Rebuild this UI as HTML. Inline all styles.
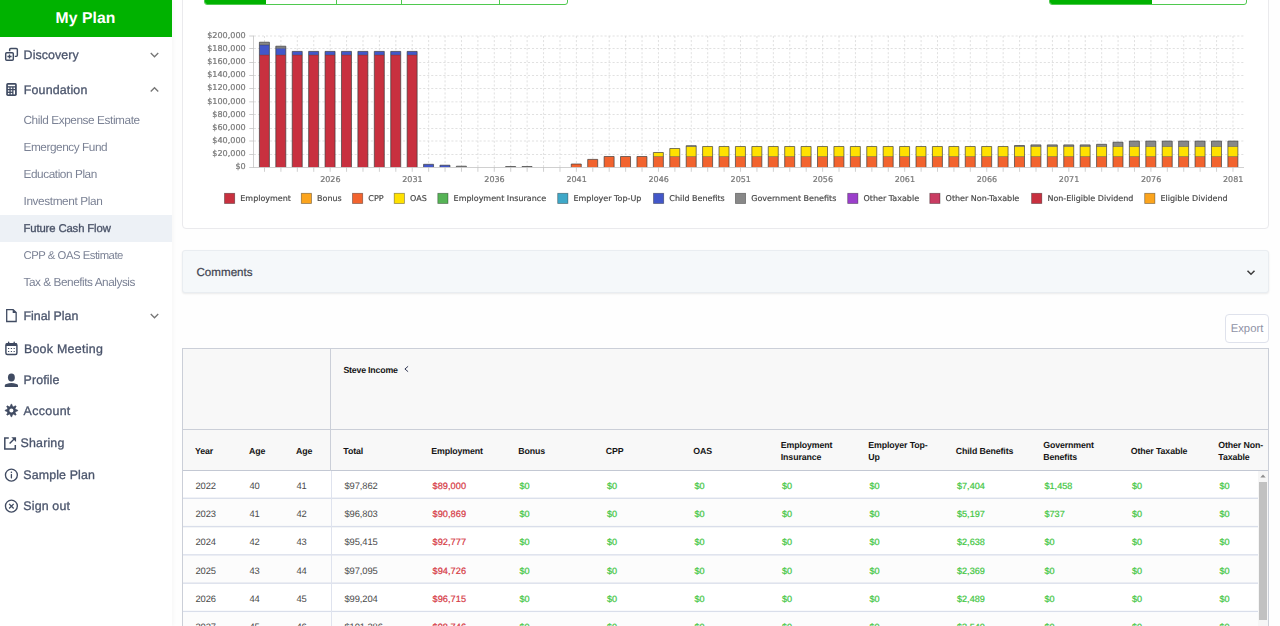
<!DOCTYPE html><html lang="en"><head><meta charset="utf-8"><title>My Plan - Future Cash Flow</title><style>
*{box-sizing:border-box;margin:0;padding:0}
html,body{width:1280px;height:626px;overflow:hidden;background:#fefefe;font-family:"Liberation Sans",sans-serif;text-rendering:geometricPrecision}
svg text{text-rendering:geometricPrecision}
#app{position:relative;width:1280px;height:626px;overflow:hidden}
.gs{will-change:transform}
.abs{position:absolute}
#side{position:absolute;left:0;top:0;width:172px;height:626px;background:#fff;box-shadow:1px 0 4px rgba(0,0,0,.04)}
#brand{position:absolute;left:0;top:0;width:172px;padding-right:1px;height:37px;background:#00b200;color:#fff;font-weight:700;font-size:15.7px;letter-spacing:0.12px;text-align:center;line-height:37px}
.mi{position:absolute;left:24px;font-size:12.4px;letter-spacing:0.05px;color:#4a546b;white-space:nowrap;line-height:16px;-webkit-text-stroke:0.3px #4a546b}
.si{position:absolute;left:24px;font-size:11.8px;color:#7b8295;white-space:nowrap;line-height:14px}
.si.act{color:#4a5368;-webkit-text-stroke:0.32px #4a5368}
.ic{position:absolute}
#card{position:absolute;left:182px;top:-20px;width:1087px;height:249px;background:#fff;border:1px solid #eaeaed;border-radius:4px}
#comments{position:absolute;left:182px;top:250px;width:1087px;height:43px;background:#f5f8fa;border:1px solid #e9edf1;border-radius:3px;box-shadow:0 1px 2px rgba(0,0,0,.08)}
#comments span{position:absolute;left:13.5px;top:15px;font-size:11.6px;line-height:14px;color:#3f4450;-webkit-text-stroke:0.22px #3f4450}
#export{position:absolute;left:1225px;top:314px;width:44px;height:29px;border:1px solid #dfe2ec;border-radius:4px;background:#fff;color:#8f93a6;font-size:11.3px;line-height:29px;text-align:center}
#tbl{position:absolute;left:182px;top:348px;width:1087px;height:290px;background:#fff;border:1px solid #cbcfd8;border-bottom:none}
.hd{position:absolute;background:#f8f8f8}
.th{position:absolute;font-weight:700;font-size:8.8px;letter-spacing:-0.12px;line-height:12px;color:#151515;white-space:nowrap}
.td{position:absolute;font-size:9.4px;letter-spacing:-0.1px;line-height:12px;color:#4a4a4a;white-space:nowrap}
.g{color:#45c745;-webkit-text-stroke:0.22px #45c745;font-size:9.1px;letter-spacing:0px}
.r{color:#d63a45;-webkit-text-stroke:0.22px #d63a45;font-size:9.2px;letter-spacing:0.05px}
.row{position:absolute;left:0;width:1075px}
.rl{position:absolute;left:0;width:1075px;height:1.33px;background:#dde1ec}
</style></head><body><div id="app">
<div id="card"></div>
<div class="abs" style="left:204.4px;top:-30px;width:363.4px;height:35px;border:1px solid #4fc94f;border-radius:3px;background:#fff;overflow:hidden"><div class="abs" style="left:-1px;top:-1px;width:62px;height:35px;background:#00b200"></div><div class="abs" style="left:131px;top:0;width:1px;height:35px;background:#4fc94f"></div><div class="abs" style="left:196px;top:0;width:1px;height:35px;background:#4fc94f"></div><div class="abs" style="left:294px;top:0;width:1px;height:35px;background:#4fc94f"></div></div>
<div class="abs" style="left:1049.4px;top:-30px;width:197.6px;height:35px;border:1px solid #4fc94f;border-radius:3px;background:#fff;overflow:hidden"><div class="abs" style="left:-1px;top:-1px;width:103px;height:35px;background:#00b200"></div></div>
<svg class="abs gs" style="left:0;top:0" width="1280" height="230" viewBox="0 0 1280 230" font-family="'DejaVu Sans',sans-serif" font-size="8"><g stroke="#d2d2d2" stroke-width="0.667" stroke-dasharray="2.1 1.93" fill="none"><path d="M253.9 36.00H1244"/><path d="M253.9 48.50H1244"/><path d="M253.9 62.50H1244"/><path d="M253.9 75.50H1244"/><path d="M253.9 88.50H1244"/><path d="M253.9 101.85H1244"/><path d="M253.9 114.50H1244"/><path d="M253.9 128.50H1244"/><path d="M253.9 141.00H1244"/><path d="M253.9 154.50H1244"/><path d="M264.50 36.0V167.5"/><path d="M280.92 36.0V167.5"/><path d="M297.33 36.0V167.5"/><path d="M313.75 36.0V167.5"/><path d="M330.16 36.0V167.5"/><path d="M346.57 36.0V167.5"/><path d="M362.99 36.0V167.5"/><path d="M379.40 36.0V167.5"/><path d="M395.82 36.0V167.5"/><path d="M412.24 36.0V167.5"/><path d="M428.65 36.0V167.5"/><path d="M445.06 36.0V167.5"/><path d="M461.48 36.0V167.5"/><path d="M477.89 36.0V167.5"/><path d="M494.31 36.0V167.5"/><path d="M510.73 36.0V167.5"/><path d="M527.14 36.0V167.5"/><path d="M543.56 36.0V167.5"/><path d="M559.97 36.0V167.5"/><path d="M576.38 36.0V167.5"/><path d="M592.80 36.0V167.5"/><path d="M609.21 36.0V167.5"/><path d="M625.63 36.0V167.5"/><path d="M642.04 36.0V167.5"/><path d="M658.46 36.0V167.5"/><path d="M674.88 36.0V167.5"/><path d="M691.29 36.0V167.5"/><path d="M707.70 36.0V167.5"/><path d="M724.12 36.0V167.5"/><path d="M740.53 36.0V167.5"/><path d="M756.95 36.0V167.5"/><path d="M773.37 36.0V167.5"/><path d="M789.78 36.0V167.5"/><path d="M806.19 36.0V167.5"/><path d="M822.61 36.0V167.5"/><path d="M839.02 36.0V167.5"/><path d="M855.44 36.0V167.5"/><path d="M871.86 36.0V167.5"/><path d="M888.27 36.0V167.5"/><path d="M904.68 36.0V167.5"/><path d="M921.10 36.0V167.5"/><path d="M937.51 36.0V167.5"/><path d="M953.93 36.0V167.5"/><path d="M970.34 36.0V167.5"/><path d="M986.76 36.0V167.5"/><path d="M1003.17 36.0V167.5"/><path d="M1019.59 36.0V167.5"/><path d="M1036.01 36.0V167.5"/><path d="M1052.42 36.0V167.5"/><path d="M1068.84 36.0V167.5"/><path d="M1085.25 36.0V167.5"/><path d="M1101.66 36.0V167.5"/><path d="M1118.08 36.0V167.5"/><path d="M1134.49 36.0V167.5"/><path d="M1150.91 36.0V167.5"/><path d="M1167.32 36.0V167.5"/><path d="M1183.74 36.0V167.5"/><path d="M1200.15 36.0V167.5"/><path d="M1216.57 36.0V167.5"/><path d="M1232.98 36.0V167.5"/></g><g stroke="#b8b8b8" stroke-width="0.667" fill="none"><path d="M253.5 35.67V167.5"/><path d="M249.2 167.5H1244"/><path d="M249.2 36.00H253.5"/><path d="M249.2 48.50H253.5"/><path d="M249.2 62.50H253.5"/><path d="M249.2 75.50H253.5"/><path d="M249.2 88.50H253.5"/><path d="M249.2 101.85H253.5"/><path d="M249.2 114.50H253.5"/><path d="M249.2 128.50H253.5"/><path d="M249.2 141.00H253.5"/><path d="M249.2 154.50H253.5"/><path d="M264.50 167.5V171.8"/><path d="M280.92 167.5V171.8"/><path d="M297.33 167.5V171.8"/><path d="M313.75 167.5V171.8"/><path d="M330.16 167.5V171.8"/><path d="M346.57 167.5V171.8"/><path d="M362.99 167.5V171.8"/><path d="M379.40 167.5V171.8"/><path d="M395.82 167.5V171.8"/><path d="M412.24 167.5V171.8"/><path d="M428.65 167.5V171.8"/><path d="M445.06 167.5V171.8"/><path d="M461.48 167.5V171.8"/><path d="M477.89 167.5V171.8"/><path d="M494.31 167.5V171.8"/><path d="M510.73 167.5V171.8"/><path d="M527.14 167.5V171.8"/><path d="M543.56 167.5V171.8"/><path d="M559.97 167.5V171.8"/><path d="M576.38 167.5V171.8"/><path d="M592.80 167.5V171.8"/><path d="M609.21 167.5V171.8"/><path d="M625.63 167.5V171.8"/><path d="M642.04 167.5V171.8"/><path d="M658.46 167.5V171.8"/><path d="M674.88 167.5V171.8"/><path d="M691.29 167.5V171.8"/><path d="M707.70 167.5V171.8"/><path d="M724.12 167.5V171.8"/><path d="M740.53 167.5V171.8"/><path d="M756.95 167.5V171.8"/><path d="M773.37 167.5V171.8"/><path d="M789.78 167.5V171.8"/><path d="M806.19 167.5V171.8"/><path d="M822.61 167.5V171.8"/><path d="M839.02 167.5V171.8"/><path d="M855.44 167.5V171.8"/><path d="M871.86 167.5V171.8"/><path d="M888.27 167.5V171.8"/><path d="M904.68 167.5V171.8"/><path d="M921.10 167.5V171.8"/><path d="M937.51 167.5V171.8"/><path d="M953.93 167.5V171.8"/><path d="M970.34 167.5V171.8"/><path d="M986.76 167.5V171.8"/><path d="M1003.17 167.5V171.8"/><path d="M1019.59 167.5V171.8"/><path d="M1036.01 167.5V171.8"/><path d="M1052.42 167.5V171.8"/><path d="M1068.84 167.5V171.8"/><path d="M1085.25 167.5V171.8"/><path d="M1101.66 167.5V171.8"/><path d="M1118.08 167.5V171.8"/><path d="M1134.49 167.5V171.8"/><path d="M1150.91 167.5V171.8"/><path d="M1167.32 167.5V171.8"/><path d="M1183.74 167.5V171.8"/><path d="M1200.15 167.5V171.8"/><path d="M1216.57 167.5V171.8"/><path d="M1232.98 167.5V171.8"/></g><g><rect x="259.40" y="54.90" width="10.0" height="112.15" fill="#c8303f"/><rect x="259.40" y="45.00" width="10.0" height="9.90" fill="#4357c9"/><rect x="259.40" y="42.20" width="10.0" height="2.80" fill="#888888"/><rect x="275.81" y="54.90" width="10.0" height="112.15" fill="#c8303f"/><rect x="275.81" y="48.30" width="10.0" height="6.60" fill="#4357c9"/><rect x="275.81" y="46.20" width="10.0" height="2.10" fill="#888888"/><rect x="292.23" y="54.90" width="10.0" height="112.15" fill="#c8303f"/><rect x="292.23" y="51.40" width="10.0" height="3.50" fill="#4357c9"/><rect x="308.64" y="54.90" width="10.0" height="112.15" fill="#c8303f"/><rect x="308.64" y="51.40" width="10.0" height="3.50" fill="#4357c9"/><rect x="325.06" y="54.90" width="10.0" height="112.15" fill="#c8303f"/><rect x="325.06" y="51.40" width="10.0" height="3.50" fill="#4357c9"/><rect x="341.47" y="54.90" width="10.0" height="112.15" fill="#c8303f"/><rect x="341.47" y="51.40" width="10.0" height="3.50" fill="#4357c9"/><rect x="357.89" y="54.90" width="10.0" height="112.15" fill="#c8303f"/><rect x="357.89" y="51.40" width="10.0" height="3.50" fill="#4357c9"/><rect x="374.30" y="54.90" width="10.0" height="112.15" fill="#c8303f"/><rect x="374.30" y="51.40" width="10.0" height="3.50" fill="#4357c9"/><rect x="390.72" y="54.90" width="10.0" height="112.15" fill="#c8303f"/><rect x="390.72" y="51.40" width="10.0" height="3.50" fill="#4357c9"/><rect x="407.13" y="54.90" width="10.0" height="112.15" fill="#c8303f"/><rect x="407.13" y="51.40" width="10.0" height="3.50" fill="#4357c9"/><rect x="423.55" y="164.30" width="10.0" height="2.75" fill="#4357c9"/><rect x="439.96" y="165.20" width="10.0" height="1.85" fill="#4357c9"/><rect x="456.38" y="166.20" width="10.0" height="0.85" fill="#888888"/><rect x="505.62" y="166.50" width="10.0" height="0.55" fill="#888888"/><rect x="522.04" y="166.50" width="10.0" height="0.55" fill="#888888"/><rect x="571.28" y="164.00" width="10.0" height="3.05" fill="#f2632e"/><rect x="587.70" y="159.40" width="10.0" height="7.65" fill="#f2632e"/><rect x="604.11" y="156.50" width="10.0" height="10.55" fill="#f2632e"/><rect x="620.53" y="156.50" width="10.0" height="10.55" fill="#f2632e"/><rect x="636.94" y="156.50" width="10.0" height="10.55" fill="#f2632e"/><rect x="653.36" y="156.50" width="10.0" height="10.55" fill="#f2632e"/><rect x="653.36" y="152.50" width="10.0" height="4.00" fill="#ffe100"/><rect x="669.77" y="156.50" width="10.0" height="10.55" fill="#f2632e"/><rect x="669.77" y="148.50" width="10.0" height="8.00" fill="#ffe100"/><rect x="686.19" y="156.50" width="10.0" height="10.55" fill="#f2632e"/><rect x="686.19" y="146.50" width="10.0" height="10.00" fill="#ffe100"/><rect x="686.19" y="145.70" width="10.0" height="0.80" fill="#888888"/><rect x="702.60" y="156.50" width="10.0" height="10.55" fill="#f2632e"/><rect x="702.60" y="146.50" width="10.0" height="10.00" fill="#ffe100"/><rect x="719.02" y="156.50" width="10.0" height="10.55" fill="#f2632e"/><rect x="719.02" y="146.50" width="10.0" height="10.00" fill="#ffe100"/><rect x="735.43" y="156.50" width="10.0" height="10.55" fill="#f2632e"/><rect x="735.43" y="146.50" width="10.0" height="10.00" fill="#ffe100"/><rect x="751.85" y="156.50" width="10.0" height="10.55" fill="#f2632e"/><rect x="751.85" y="146.50" width="10.0" height="10.00" fill="#ffe100"/><rect x="768.26" y="156.50" width="10.0" height="10.55" fill="#f2632e"/><rect x="768.26" y="146.50" width="10.0" height="10.00" fill="#ffe100"/><rect x="784.68" y="156.50" width="10.0" height="10.55" fill="#f2632e"/><rect x="784.68" y="146.50" width="10.0" height="10.00" fill="#ffe100"/><rect x="801.09" y="156.50" width="10.0" height="10.55" fill="#f2632e"/><rect x="801.09" y="146.50" width="10.0" height="10.00" fill="#ffe100"/><rect x="817.51" y="156.50" width="10.0" height="10.55" fill="#f2632e"/><rect x="817.51" y="146.50" width="10.0" height="10.00" fill="#ffe100"/><rect x="833.92" y="156.50" width="10.0" height="10.55" fill="#f2632e"/><rect x="833.92" y="146.50" width="10.0" height="10.00" fill="#ffe100"/><rect x="850.34" y="156.50" width="10.0" height="10.55" fill="#f2632e"/><rect x="850.34" y="146.50" width="10.0" height="10.00" fill="#ffe100"/><rect x="866.75" y="156.50" width="10.0" height="10.55" fill="#f2632e"/><rect x="866.75" y="146.50" width="10.0" height="10.00" fill="#ffe100"/><rect x="883.17" y="156.50" width="10.0" height="10.55" fill="#f2632e"/><rect x="883.17" y="146.50" width="10.0" height="10.00" fill="#ffe100"/><rect x="899.58" y="156.50" width="10.0" height="10.55" fill="#f2632e"/><rect x="899.58" y="146.50" width="10.0" height="10.00" fill="#ffe100"/><rect x="916.00" y="156.50" width="10.0" height="10.55" fill="#f2632e"/><rect x="916.00" y="146.50" width="10.0" height="10.00" fill="#ffe100"/><rect x="932.41" y="156.50" width="10.0" height="10.55" fill="#f2632e"/><rect x="932.41" y="146.50" width="10.0" height="10.00" fill="#ffe100"/><rect x="948.83" y="156.50" width="10.0" height="10.55" fill="#f2632e"/><rect x="948.83" y="146.50" width="10.0" height="10.00" fill="#ffe100"/><rect x="965.24" y="156.50" width="10.0" height="10.55" fill="#f2632e"/><rect x="965.24" y="146.50" width="10.0" height="10.00" fill="#ffe100"/><rect x="981.66" y="156.50" width="10.0" height="10.55" fill="#f2632e"/><rect x="981.66" y="146.50" width="10.0" height="10.00" fill="#ffe100"/><rect x="998.07" y="156.50" width="10.0" height="10.55" fill="#f2632e"/><rect x="998.07" y="146.50" width="10.0" height="10.00" fill="#ffe100"/><rect x="1014.49" y="156.50" width="10.0" height="10.55" fill="#f2632e"/><rect x="1014.49" y="146.50" width="10.0" height="10.00" fill="#ffe100"/><rect x="1014.49" y="145.50" width="10.0" height="1.00" fill="#888888"/><rect x="1030.91" y="156.50" width="10.0" height="10.55" fill="#f2632e"/><rect x="1030.91" y="146.50" width="10.0" height="10.00" fill="#ffe100"/><rect x="1030.91" y="144.90" width="10.0" height="1.60" fill="#888888"/><rect x="1047.32" y="156.50" width="10.0" height="10.55" fill="#f2632e"/><rect x="1047.32" y="146.50" width="10.0" height="10.00" fill="#ffe100"/><rect x="1047.32" y="144.90" width="10.0" height="1.60" fill="#888888"/><rect x="1063.74" y="156.50" width="10.0" height="10.55" fill="#f2632e"/><rect x="1063.74" y="146.50" width="10.0" height="10.00" fill="#ffe100"/><rect x="1063.74" y="144.90" width="10.0" height="1.60" fill="#888888"/><rect x="1080.15" y="156.50" width="10.0" height="10.55" fill="#f2632e"/><rect x="1080.15" y="146.50" width="10.0" height="10.00" fill="#ffe100"/><rect x="1080.15" y="144.90" width="10.0" height="1.60" fill="#888888"/><rect x="1096.57" y="156.50" width="10.0" height="10.55" fill="#f2632e"/><rect x="1096.57" y="146.50" width="10.0" height="10.00" fill="#ffe100"/><rect x="1096.57" y="144.30" width="10.0" height="2.20" fill="#888888"/><rect x="1112.98" y="156.50" width="10.0" height="10.55" fill="#f2632e"/><rect x="1112.98" y="146.50" width="10.0" height="10.00" fill="#ffe100"/><rect x="1112.98" y="142.20" width="10.0" height="4.30" fill="#888888"/><rect x="1129.39" y="156.50" width="10.0" height="10.55" fill="#f2632e"/><rect x="1129.39" y="146.50" width="10.0" height="10.00" fill="#ffe100"/><rect x="1129.39" y="141.10" width="10.0" height="5.40" fill="#888888"/><rect x="1145.81" y="156.50" width="10.0" height="10.55" fill="#f2632e"/><rect x="1145.81" y="146.50" width="10.0" height="10.00" fill="#ffe100"/><rect x="1145.81" y="141.10" width="10.0" height="5.40" fill="#888888"/><rect x="1162.22" y="156.50" width="10.0" height="10.55" fill="#f2632e"/><rect x="1162.22" y="146.50" width="10.0" height="10.00" fill="#ffe100"/><rect x="1162.22" y="141.10" width="10.0" height="5.40" fill="#888888"/><rect x="1178.64" y="156.50" width="10.0" height="10.55" fill="#f2632e"/><rect x="1178.64" y="146.50" width="10.0" height="10.00" fill="#ffe100"/><rect x="1178.64" y="141.10" width="10.0" height="5.40" fill="#888888"/><rect x="1195.06" y="156.50" width="10.0" height="10.55" fill="#f2632e"/><rect x="1195.06" y="146.50" width="10.0" height="10.00" fill="#ffe100"/><rect x="1195.06" y="141.10" width="10.0" height="5.40" fill="#888888"/><rect x="1211.47" y="156.50" width="10.0" height="10.55" fill="#f2632e"/><rect x="1211.47" y="146.50" width="10.0" height="10.00" fill="#ffe100"/><rect x="1211.47" y="141.10" width="10.0" height="5.40" fill="#888888"/><rect x="1227.88" y="156.50" width="10.0" height="10.55" fill="#f2632e"/><rect x="1227.88" y="146.50" width="10.0" height="10.00" fill="#ffe100"/><rect x="1227.88" y="141.10" width="10.0" height="5.40" fill="#888888"/></g><path d="M259.40 54.90h10.0M259.40 45.00h10.0M275.81 54.90h10.0M275.81 48.30h10.0M292.23 54.90h10.0M308.64 54.90h10.0M325.06 54.90h10.0M341.47 54.90h10.0M357.89 54.90h10.0M374.30 54.90h10.0M390.72 54.90h10.0M407.13 54.90h10.0M653.36 156.50h10.0M669.77 156.50h10.0M686.19 156.50h10.0M686.19 146.50h10.0M702.60 156.50h10.0M719.02 156.50h10.0M735.43 156.50h10.0M751.85 156.50h10.0M768.26 156.50h10.0M784.68 156.50h10.0M801.09 156.50h10.0M817.51 156.50h10.0M833.92 156.50h10.0M850.34 156.50h10.0M866.75 156.50h10.0M883.17 156.50h10.0M899.58 156.50h10.0M916.00 156.50h10.0M932.41 156.50h10.0M948.83 156.50h10.0M965.24 156.50h10.0M981.66 156.50h10.0M998.07 156.50h10.0M1014.49 156.50h10.0M1014.49 146.50h10.0M1030.91 156.50h10.0M1030.91 146.50h10.0M1047.32 156.50h10.0M1047.32 146.50h10.0M1063.74 156.50h10.0M1063.74 146.50h10.0M1080.15 156.50h10.0M1080.15 146.50h10.0M1096.57 156.50h10.0M1096.57 146.50h10.0M1112.98 156.50h10.0M1112.98 146.50h10.0M1129.39 156.50h10.0M1129.39 146.50h10.0M1145.81 156.50h10.0M1145.81 146.50h10.0M1162.22 156.50h10.0M1162.22 146.50h10.0M1178.64 156.50h10.0M1178.64 146.50h10.0M1195.06 156.50h10.0M1195.06 146.50h10.0M1211.47 156.50h10.0M1211.47 146.50h10.0M1227.88 156.50h10.0M1227.88 146.50h10.0" fill="none" stroke="#2a2a2a" stroke-opacity="0.5" stroke-width="0.75"/><path d="M259.40 167.05V42.20h10.0V167.05M275.81 167.05V46.20h10.0V167.05M292.23 167.05V51.40h10.0V167.05M308.64 167.05V51.40h10.0V167.05M325.06 167.05V51.40h10.0V167.05M341.47 167.05V51.40h10.0V167.05M357.89 167.05V51.40h10.0V167.05M374.30 167.05V51.40h10.0V167.05M390.72 167.05V51.40h10.0V167.05M407.13 167.05V51.40h10.0V167.05M423.55 167.05V164.30h10.0V167.05M439.96 167.05V165.20h10.0V167.05M456.38 167.05V166.20h10.0V167.05M505.62 167.05V166.50h10.0V167.05M522.04 167.05V166.50h10.0V167.05M571.28 167.05V164.00h10.0V167.05M587.70 167.05V159.40h10.0V167.05M604.11 167.05V156.50h10.0V167.05M620.53 167.05V156.50h10.0V167.05M636.94 167.05V156.50h10.0V167.05M653.36 167.05V152.50h10.0V167.05M669.77 167.05V148.50h10.0V167.05M686.19 167.05V145.70h10.0V167.05M702.60 167.05V146.50h10.0V167.05M719.02 167.05V146.50h10.0V167.05M735.43 167.05V146.50h10.0V167.05M751.85 167.05V146.50h10.0V167.05M768.26 167.05V146.50h10.0V167.05M784.68 167.05V146.50h10.0V167.05M801.09 167.05V146.50h10.0V167.05M817.51 167.05V146.50h10.0V167.05M833.92 167.05V146.50h10.0V167.05M850.34 167.05V146.50h10.0V167.05M866.75 167.05V146.50h10.0V167.05M883.17 167.05V146.50h10.0V167.05M899.58 167.05V146.50h10.0V167.05M916.00 167.05V146.50h10.0V167.05M932.41 167.05V146.50h10.0V167.05M948.83 167.05V146.50h10.0V167.05M965.24 167.05V146.50h10.0V167.05M981.66 167.05V146.50h10.0V167.05M998.07 167.05V146.50h10.0V167.05M1014.49 167.05V145.50h10.0V167.05M1030.91 167.05V144.90h10.0V167.05M1047.32 167.05V144.90h10.0V167.05M1063.74 167.05V144.90h10.0V167.05M1080.15 167.05V144.90h10.0V167.05M1096.57 167.05V144.30h10.0V167.05M1112.98 167.05V142.20h10.0V167.05M1129.39 167.05V141.10h10.0V167.05M1145.81 167.05V141.10h10.0V167.05M1162.22 167.05V141.10h10.0V167.05M1178.64 167.05V141.10h10.0V167.05M1195.06 167.05V141.10h10.0V167.05M1211.47 167.05V141.10h10.0V167.05M1227.88 167.05V141.10h10.0V167.05" fill="none" stroke="#3a3a3a" stroke-opacity="0.75" stroke-width="0.9"/><g fill="#797979" stroke="#797979" stroke-width="0.22" text-anchor="end" font-size="8.1"><text x="245.75" y="38">$200,000</text><text x="245.75" y="51">$180,000</text><text x="245.75" y="64">$160,000</text><text x="245.75" y="77">$140,000</text><text x="245.75" y="90">$120,000</text><text x="245.75" y="104">$100,000</text><text x="245.75" y="117">$80,000</text><text x="245.75" y="130">$60,000</text><text x="245.75" y="143">$40,000</text><text x="245.75" y="156">$20,000</text><text x="245.75" y="169">$0</text></g><g fill="#797979" stroke="#797979" stroke-width="0.22" text-anchor="middle"><text x="330.36" y="182">2026</text><text x="412.44" y="182">2031</text><text x="494.51" y="182">2036</text><text x="576.59" y="182">2041</text><text x="658.66" y="182">2046</text><text x="740.74" y="182">2051</text><text x="822.81" y="182">2056</text><text x="904.88" y="182">2061</text><text x="986.96" y="182">2066</text><text x="1069.04" y="182">2071</text><text x="1151.11" y="182">2076</text><text x="1233.18" y="182">2081</text></g><g><rect x="224.5" y="193.3" width="10.2" height="10.2" fill="#c8303f" stroke="#000" stroke-opacity="0.4" stroke-width="0.8"/><text x="240.3" y="201.3" fill="#484848" stroke="#484848" stroke-width="0.18">Employment</text><rect x="301.3" y="193.3" width="10.2" height="10.2" fill="#fba41d" stroke="#000" stroke-opacity="0.4" stroke-width="0.8"/><text x="317.1" y="201.3" fill="#484848" stroke="#484848" stroke-width="0.18">Bonus</text><rect x="352.5" y="193.3" width="10.2" height="10.2" fill="#f2632e" stroke="#000" stroke-opacity="0.4" stroke-width="0.8"/><text x="368.3" y="201.3" fill="#484848" stroke="#484848" stroke-width="0.18">CPP</text><rect x="394.2" y="193.3" width="10.2" height="10.2" fill="#ffe100" stroke="#000" stroke-opacity="0.4" stroke-width="0.8"/><text x="410.0" y="201.3" fill="#484848" stroke="#484848" stroke-width="0.18">OAS</text><rect x="437.8" y="193.3" width="10.2" height="10.2" fill="#56b356" stroke="#000" stroke-opacity="0.4" stroke-width="0.8"/><text x="453.6" y="201.3" fill="#484848" stroke="#484848" stroke-width="0.18">Employment Insurance</text><rect x="557.7" y="193.3" width="10.2" height="10.2" fill="#3fa8c8" stroke="#000" stroke-opacity="0.4" stroke-width="0.8"/><text x="573.5" y="201.3" fill="#484848" stroke="#484848" stroke-width="0.18">Employer Top-Up</text><rect x="653.5" y="193.3" width="10.2" height="10.2" fill="#4357c9" stroke="#000" stroke-opacity="0.4" stroke-width="0.8"/><text x="669.3" y="201.3" fill="#484848" stroke="#484848" stroke-width="0.18">Child Benefits</text><rect x="735.4" y="193.3" width="10.2" height="10.2" fill="#888888" stroke="#000" stroke-opacity="0.4" stroke-width="0.8"/><text x="751.2" y="201.3" fill="#484848" stroke="#484848" stroke-width="0.18">Government Benefits</text><rect x="847.7" y="193.3" width="10.2" height="10.2" fill="#9b3fcb" stroke="#000" stroke-opacity="0.4" stroke-width="0.8"/><text x="863.5" y="201.3" fill="#484848" stroke="#484848" stroke-width="0.18">Other Taxable</text><rect x="929.8" y="193.3" width="10.2" height="10.2" fill="#c93c62" stroke="#000" stroke-opacity="0.4" stroke-width="0.8"/><text x="945.6" y="201.3" fill="#484848" stroke="#484848" stroke-width="0.18">Other Non-Taxable</text><rect x="1031.6" y="193.3" width="10.2" height="10.2" fill="#c8303f" stroke="#000" stroke-opacity="0.4" stroke-width="0.8"/><text x="1047.4" y="201.3" fill="#484848" stroke="#484848" stroke-width="0.18">Non-Eligible Dividend</text><rect x="1144.7" y="193.3" width="10.2" height="10.2" fill="#fba41d" stroke="#000" stroke-opacity="0.4" stroke-width="0.8"/><text x="1160.5" y="201.3" fill="#484848" stroke="#484848" stroke-width="0.18">Eligible Dividend</text></g></svg>
<div id="comments"><span>Comments</span><svg class="abs" style="left:1063.2px;top:17.8px" width="10" height="8" viewBox="0 0 10 8"><path d="M1.5 1.8L5 5.3L8.5 1.8" fill="none" stroke="#3c3c3c" stroke-width="1.5"/></svg></div>
<div id="export">Export</div>
<div id="tbl"><div class="hd" style="left:0;top:0;width:1085px;height:122px"></div><div class="abs" style="left:0;top:80px;width:1085px;height:1px;background:#cbcfd8"></div><div class="abs" style="left:0;top:121px;width:1085px;height:1.5px;background:#c3c8d3"></div><div class="abs" style="left:147px;top:0;width:1px;height:122px;background:#cbcfd8"></div><div class="abs" style="left:147.5px;top:122px;width:1px;height:200px;background:#dfe3ee"></div><div class="th" style="left:160.4px;top:14.5px;letter-spacing:-0.2px">Steve Income</div><svg class="abs" style="left:220px;top:15px" width="8" height="10" viewBox="220 15 8 10"><path d="M225.1 17.3L221.9 20L225.1 22.7" fill="none" stroke="#2c3350" stroke-width="0.95"/></svg><div class="th" style="left:12px;top:96.3px">Year</div><div class="th" style="left:66px;top:96.3px">Age</div><div class="th" style="left:113px;top:96.3px">Age</div><div class="th" style="left:160.3px;top:96.3px">Total</div><div class="th" style="left:248.3px;top:96.3px">Employment</div><div class="th" style="left:335.3px;top:96.3px">Bonus</div><div class="th" style="left:422.8px;top:96.3px">CPP</div><div class="th" style="left:510.3px;top:96.3px">OAS</div><div class="th" style="left:597.8px;top:90.2px">Employment<br>Insurance</div><div class="th" style="left:685.3px;top:90.2px">Employer Top-<br>Up</div><div class="th" style="left:772.8px;top:96.3px">Child Benefits</div><div class="th" style="left:860.3px;top:90.2px">Government<br>Benefits</div><div class="th" style="left:947.8px;top:96.3px">Other Taxable</div><div class="th" style="left:1035.3px;top:90.2px">Other Non-<br>Taxable</div><div class="row" style="top:122.0px;height:28.3px;background:#fff"><div class="td" style="left:12.5px;top:9.3px">2022</div><div class="td" style="left:66.5px;top:9.3px">40</div><div class="td" style="left:113.5px;top:9.3px">41</div><div class="td" style="left:161.5px;top:9.3px">$97,862</div><div class="td r" style="left:249.5px;top:9.3px">$89,000</div><div class="td g" style="left:336.5px;top:9.3px">$0</div><div class="td g" style="left:424px;top:9.3px">$0</div><div class="td g" style="left:511.5px;top:9.3px">$0</div><div class="td g" style="left:599px;top:9.3px">$0</div><div class="td g" style="left:686.5px;top:9.3px">$0</div><div class="td g" style="left:774px;top:9.3px">$7,404</div><div class="td g" style="left:861.5px;top:9.3px">$1,458</div><div class="td g" style="left:949px;top:9.3px">$0</div><div class="td g" style="left:1036.5px;top:9.3px">$0</div></div><div class="row" style="top:150.3px;height:28.3px;background:#fcfcfc"><div class="td" style="left:12.5px;top:8.4px">2023</div><div class="td" style="left:66.5px;top:8.4px">41</div><div class="td" style="left:113.5px;top:8.4px">42</div><div class="td" style="left:161.5px;top:8.4px">$96,803</div><div class="td r" style="left:249.5px;top:8.4px">$90,869</div><div class="td g" style="left:336.5px;top:8.4px">$0</div><div class="td g" style="left:424px;top:8.4px">$0</div><div class="td g" style="left:511.5px;top:8.4px">$0</div><div class="td g" style="left:599px;top:8.4px">$0</div><div class="td g" style="left:686.5px;top:8.4px">$0</div><div class="td g" style="left:774px;top:8.4px">$5,197</div><div class="td g" style="left:861.5px;top:8.4px">$737</div><div class="td g" style="left:949px;top:8.4px">$0</div><div class="td g" style="left:1036.5px;top:8.4px">$0</div></div><div class="row" style="top:178.6px;height:28.3px;background:#fff"><div class="td" style="left:12.5px;top:8.4px">2024</div><div class="td" style="left:66.5px;top:8.4px">42</div><div class="td" style="left:113.5px;top:8.4px">43</div><div class="td" style="left:161.5px;top:8.4px">$95,415</div><div class="td r" style="left:249.5px;top:8.4px">$92,777</div><div class="td g" style="left:336.5px;top:8.4px">$0</div><div class="td g" style="left:424px;top:8.4px">$0</div><div class="td g" style="left:511.5px;top:8.4px">$0</div><div class="td g" style="left:599px;top:8.4px">$0</div><div class="td g" style="left:686.5px;top:8.4px">$0</div><div class="td g" style="left:774px;top:8.4px">$2,638</div><div class="td g" style="left:861.5px;top:8.4px">$0</div><div class="td g" style="left:949px;top:8.4px">$0</div><div class="td g" style="left:1036.5px;top:8.4px">$0</div></div><div class="row" style="top:206.9px;height:28.3px;background:#fcfcfc"><div class="td" style="left:12.5px;top:9.3px">2025</div><div class="td" style="left:66.5px;top:9.3px">43</div><div class="td" style="left:113.5px;top:9.3px">44</div><div class="td" style="left:161.5px;top:9.3px">$97,095</div><div class="td r" style="left:249.5px;top:9.3px">$94,726</div><div class="td g" style="left:336.5px;top:9.3px">$0</div><div class="td g" style="left:424px;top:9.3px">$0</div><div class="td g" style="left:511.5px;top:9.3px">$0</div><div class="td g" style="left:599px;top:9.3px">$0</div><div class="td g" style="left:686.5px;top:9.3px">$0</div><div class="td g" style="left:774px;top:9.3px">$2,369</div><div class="td g" style="left:861.5px;top:9.3px">$0</div><div class="td g" style="left:949px;top:9.3px">$0</div><div class="td g" style="left:1036.5px;top:9.3px">$0</div></div><div class="row" style="top:235.2px;height:28.3px;background:#fff"><div class="td" style="left:12.5px;top:9.3px">2026</div><div class="td" style="left:66.5px;top:9.3px">44</div><div class="td" style="left:113.5px;top:9.3px">45</div><div class="td" style="left:161.5px;top:9.3px">$99,204</div><div class="td r" style="left:249.5px;top:9.3px">$96,715</div><div class="td g" style="left:336.5px;top:9.3px">$0</div><div class="td g" style="left:424px;top:9.3px">$0</div><div class="td g" style="left:511.5px;top:9.3px">$0</div><div class="td g" style="left:599px;top:9.3px">$0</div><div class="td g" style="left:686.5px;top:9.3px">$0</div><div class="td g" style="left:774px;top:9.3px">$2,489</div><div class="td g" style="left:861.5px;top:9.3px">$0</div><div class="td g" style="left:949px;top:9.3px">$0</div><div class="td g" style="left:1036.5px;top:9.3px">$0</div></div><div class="row" style="top:263.5px;height:28.3px;background:#fcfcfc"><div class="td" style="left:12.5px;top:8.4px">2027</div><div class="td" style="left:66.5px;top:8.4px">45</div><div class="td" style="left:113.5px;top:8.4px">46</div><div class="td" style="left:161.5px;top:8.4px">$101,286</div><div class="td r" style="left:249.5px;top:8.4px">$98,746</div><div class="td g" style="left:336.5px;top:8.4px">$0</div><div class="td g" style="left:424px;top:8.4px">$0</div><div class="td g" style="left:511.5px;top:8.4px">$0</div><div class="td g" style="left:599px;top:8.4px">$0</div><div class="td g" style="left:686.5px;top:8.4px">$0</div><div class="td g" style="left:774px;top:8.4px">$2,540</div><div class="td g" style="left:861.5px;top:8.4px">$0</div><div class="td g" style="left:949px;top:8.4px">$0</div><div class="td g" style="left:1036.5px;top:8.4px">$0</div></div><svg class="abs" style="left:0;top:122px" width="1075" height="160" viewBox="0 122 1075 160"><rect x="0" y="148.60" width="1075" height="1.33" fill="#d9deea"/><rect x="0" y="176.90" width="1075" height="1.33" fill="#d9deea"/><rect x="0" y="205.20" width="1075" height="1.33" fill="#d9deea"/><rect x="0" y="233.50" width="1075" height="1.33" fill="#d9deea"/><rect x="0" y="261.80" width="1075" height="1.33" fill="#d9deea"/><rect x="0" y="290.10" width="1075" height="1.33" fill="#d9deea"/></svg><div class="abs" style="left:147.5px;top:122px;width:1px;height:200px;background:#dfe3ee"></div><div class="abs" style="left:1075px;top:122px;width:10px;height:200px;background:#f6f6f6"></div><div class="abs" style="left:1075.8px;top:133.2px;width:8.3px;height:138px;background:#c1c1c1"></div><svg class="abs" style="left:1075px;top:122px" width="10" height="10" viewBox="0 0 10 10"><path d="M2.3 6.4L5 3.5L7.7 6.4Z" fill="#8f8f8f"/></svg></div>
<div id="side"><div id="brand">My Plan</div><div class="gs abs" style="left:0;top:37px;width:172px;height:589px"><div class="abs" style="left:0;top:-37px;width:172px;height:626px"><div class="mi" style="left:23.6px;top:47px;letter-spacing:0.089px">Discovery</div><div class="mi" style="left:23.8px;top:82px;letter-spacing:0.165px">Foundation</div><div class="mi" style="left:23.6px;top:308px;letter-spacing:-0.045px">Final Plan</div><div class="mi" style="left:23.9px;top:341px;letter-spacing:0.285px">Book Meeting</div><div class="mi" style="left:23.6px;top:372px;letter-spacing:0.096px">Profile</div><div class="mi" style="left:23.6px;top:403px;letter-spacing:0.320px">Account</div><div class="mi" style="left:20.6px;top:435px;letter-spacing:0.164px">Sharing</div><div class="mi" style="left:23.3px;top:467px;letter-spacing:0.133px">Sample Plan</div><div class="mi" style="left:23.3px;top:498px;letter-spacing:0.162px">Sign out</div><svg class="ic" style="left:0;top:0" width="172" height="626" viewBox="0 0 172 626" fill="none" stroke="#404b62" stroke-width="1.3"><rect x="5.7" y="52.7" width="7.6" height="7.6" rx="1.05" stroke-width="1.45"/><path d="M9.65 51.2V49.55Q9.65 48.45 10.75 48.45H16.25Q17.35 48.45 17.35 49.55V55.25Q17.35 56.35 16.25 56.35H14.8" stroke-width="1.45"/><path d="M9.5 54.4V58.6M7.4 56.5H11.6" stroke-width="1.3"/><g stroke="none" fill="#404b62" transform="translate(6.2 82.95)"><rect x="0" y="0" width="10.6" height="13.1" rx="1.7"/><g fill="#fff"><rect x="1.7" y="1.8" width="7.2" height="1.45"/><rect x="1.70" y="4.60" width="1.5" height="1.4"/><rect x="1.70" y="7.30" width="1.5" height="1.4"/><rect x="1.70" y="10.00" width="1.5" height="1.4"/><rect x="4.50" y="4.60" width="1.5" height="1.4"/><rect x="4.50" y="7.30" width="1.5" height="1.4"/><rect x="4.50" y="10.00" width="1.5" height="1.4"/><rect x="7.3" y="4.6" width="1.5" height="1.4"/><rect x="7.3" y="7.3" width="1.5" height="4.1"/></g></g><path d="M6.7 309.6H13.1L16.15 312.5V321.5H6.7Z"/><path d="M12.7 309.3V312.9H16.5Z" fill="#404b62" stroke="none"/><rect x="5.9" y="343.8" width="11" height="10.7" rx="1.5" stroke-width="1.45"/><rect x="5.9" y="343.3" width="11" height="2.7" fill="#404b62" stroke="none"/><path d="M8.63 342.1V344.5M14.19 342.1V344.5" stroke-width="1.35" stroke-linecap="round"/><g fill="#404b62" stroke="none"><rect x="7.98" y="347.90" width="1.3" height="1.2" rx="0.3"/><rect x="7.98" y="350.90" width="1.3" height="1.2" rx="0.3"/><rect x="10.75" y="347.90" width="1.3" height="1.2" rx="0.3"/><rect x="10.75" y="350.90" width="1.3" height="1.2" rx="0.3"/><rect x="13.54" y="347.90" width="1.3" height="1.2" rx="0.3"/><rect x="13.54" y="350.90" width="1.3" height="1.2" rx="0.3"/></g><g fill="#404b62" stroke="none"><ellipse cx="11.4" cy="377.5" rx="3.45" ry="4.0"/><path d="M4.8 387V385.5Q4.8 384.6 6.3 384.1Q9 383.05 11.4 383.05Q13.8 383.05 16.5 384.1Q18 384.6 18 385.5V387Z"/></g><path d="M10.22 406.68L11.09 404.21L11.71 404.21L12.58 406.68ZM13.27 406.96L15.63 405.83L16.07 406.27L14.94 408.63ZM15.22 409.32L17.69 410.19L17.69 410.81L15.22 411.68ZM14.94 412.37L16.07 414.73L15.63 415.17L13.27 414.04ZM12.58 414.32L11.71 416.79L11.09 416.79L10.22 414.32ZM9.53 414.04L7.17 415.17L6.73 414.73L7.86 412.37ZM7.58 411.68L5.11 410.81L5.11 410.19L7.58 409.32ZM7.86 408.63L6.73 406.27L7.17 405.83L9.53 406.96Z" fill="#404b62" stroke="#404b62" stroke-width="0.7" stroke-linejoin="round"/><circle cx="11.4" cy="410.5" r="3.2" stroke-width="2.3"/><path d="M8.8 437.9H4.8V449H15.3V445" stroke-width="1.5"/><path d="M9.6 443.5L14.6 438.5" stroke-width="1.4"/><path d="M11.3 437.2H16.05V441.95Z" fill="#404b62" stroke="none"/><circle cx="11.4" cy="475.1" r="5.95" stroke-width="1.35"/><g fill="#404b62" stroke="none"><rect x="10.75" y="473.9" width="1.3" height="4.6" rx="0.4"/><circle cx="11.4" cy="472.35" r="0.8"/></g><circle cx="11.4" cy="506.1" r="5.95" stroke-width="1.35"/><path d="M9.1 503.9L13.7 508.5M13.7 503.9L9.1 508.5" stroke-width="1.3"/></svg><svg class="ic" style="left:0;top:0" width="172" height="626" viewBox="0 0 172 626"><path d="M150.75 53.0L154.5 56.75L158.25 53.0" fill="none" stroke="#757575" stroke-width="1.3"/></svg><svg class="ic" style="left:0;top:0" width="172" height="626" viewBox="0 0 172 626"><path d="M150.75 91.5L154.5 87.75L158.25 91.5" fill="none" stroke="#757575" stroke-width="1.3"/></svg><svg class="ic" style="left:0;top:0" width="172" height="626" viewBox="0 0 172 626"><path d="M150.75 314.0L154.5 317.75L158.25 314.0" fill="none" stroke="#757575" stroke-width="1.3"/></svg><div class="si" style="left:23.5px;top:113px;font-size:11.8px;letter-spacing:-0.412px">Child Expense Estimate</div><div class="si" style="left:23.5px;top:140px;font-size:11.8px;letter-spacing:-0.442px">Emergency Fund</div><div class="si" style="left:23.5px;top:167px;font-size:11.8px;letter-spacing:-0.428px">Education Plan</div><div class="si" style="left:23.5px;top:194px;font-size:11.8px;letter-spacing:-0.385px">Investment Plan</div><div class="abs" style="left:0;top:214.7px;width:172px;height:27px;background:#edf1f6"></div><div class="si act" style="left:23.5px;top:221.5px;font-size:11.3px;letter-spacing:-0.124px">Future Cash Flow</div><div class="si" style="left:23.5px;top:248.5px;font-size:11.3px;letter-spacing:-0.464px">CPP &amp; OAS Estimate</div><div class="si" style="left:23.5px;top:275px;font-size:11.8px;letter-spacing:-0.458px">Tax &amp; Benefits Analysis</div></div></div></div>
</div></body></html>
